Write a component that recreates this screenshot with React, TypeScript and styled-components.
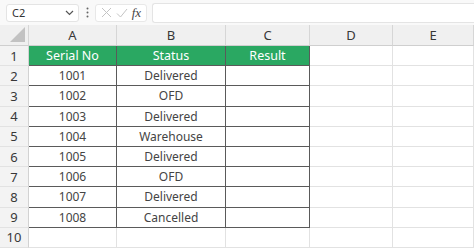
import React from 'react';
import styled, { createGlobalStyle } from 'styled-components';

const GlobalStyle = createGlobalStyle`
  html, body {
    margin: 0;
    padding: 0;
    background: #ffffff;
    overflow: hidden;
  }
  body {
    font-family: "Noto Sans", "Open Sans", sans-serif;
  }
`;

const COLS = [29, 88, 109, 84, 83, 81];
const GREEN = '#2aa862';
const DARK = '#5a5a5a';
const GRID = '#e2e2e2';

const rows = [
  ['Serial No', 'Status', 'Result'],
  ['1001', 'Delivered', ''],
  ['1002', 'OFD', ''],
  ['1003', 'Delivered', ''],
  ['1004', 'Warehouse', ''],
  ['1005', 'Delivered', ''],
  ['1006', 'OFD', ''],
  ['1007', 'Delivered', ''],
  ['1008', 'Cancelled', ''],
  ['', '', ''],
];

const Page = styled.div`
  width: 474px;
  height: 248px;
  overflow: hidden;
  background: #ffffff;
`;

const Toolbar = styled.div`
  display: flex;
  align-items: center;
  height: 25px;
  padding: 0 0 0 6px;
  box-sizing: border-box;
  background: #f9f9f9;
`;

const NameBox = styled.div`
  display: flex;
  align-items: center;
  justify-content: space-between;
  width: 73px;
  height: 18px;
  box-sizing: border-box;
  padding: 0 4px 0 5px;
  background: #ffffff;
  border: 1px solid #e4e4e4;
  border-radius: 3px;
  font-size: 11px;
  color: #333333;
`;

const Dots = styled.div`
  width: 16px;
  display: flex;
  justify-content: center;
`;

const FxBox = styled.div`
  display: flex;
  align-items: center;
  justify-content: space-around;
  width: 52px;
  height: 18px;
  box-sizing: border-box;
  padding: 0 3px;
  background: #ffffff;
  border: 1px solid #e8e8e8;
  border-radius: 3px;
`;

const Fx = styled.span`
  font-family: "Liberation Serif", serif;
  font-style: italic;
  font-size: 13px;
  color: #444444;
  line-height: 1;
`;

const FormulaInput = styled.div`
  flex: 1;
  height: 18px;
  margin-left: 5px;
  background: #ffffff;
  border: 1px solid #e4e4e4;
  border-right: none;
  border-radius: 3px 0 0 3px;
`;

const Sheet = styled.div`
  display: grid;
  grid-template-columns: ${COLS.map((c) => `${c}px`).join(' ')};
  grid-template-rows: 21px;
  grid-auto-rows: 20.2px;
`;

const ColHead = styled.div`
  display: flex;
  align-items: center;
  justify-content: center;
  background: #f0f0f0;
  border-right: 1px solid #d6d6d6;
  border-bottom: 1px solid #cfcfcf;
  box-sizing: border-box;
  font-size: 13px;
  color: #383838;
  position: relative;
`;

const Corner = styled(ColHead)`
  svg {
    position: absolute;
    right: 3px;
    bottom: 3px;
  }
`;

const RowHead = styled.div`
  display: flex;
  align-items: center;
  justify-content: center;
  background: #f3f3f3;
  border-right: 1px solid #d2d2d2;
  border-bottom: 1px solid ${GRID};
  box-sizing: border-box;
  font-size: 13px;
  color: #383838;
`;

const Cell = styled.div<{ $head?: boolean; $data?: boolean }>`
  display: flex;
  align-items: center;
  justify-content: center;
  box-sizing: border-box;
  background: ${(p) => (p.$head ? GREEN : '#ffffff')};
  color: ${(p) => (p.$head ? '#ffffff' : '#444444')};
  border-right: 1px solid ${(p) => (p.$data ? DARK : GRID)};
  border-bottom: 1px solid ${(p) => (p.$data ? DARK : GRID)};
  font-size: ${(p) => (p.$head ? '12.5px' : '12px')};
  white-space: nowrap;
`;

export default function App() {
  return (
    <Page>
      <GlobalStyle />
      <Toolbar>
        <NameBox>
          <span>C2</span>
          <svg width="9" height="6" viewBox="0 0 9 6">
            <path d="M1 1 L4.5 4.5 L8 1" fill="none" stroke="#555" strokeWidth="1.2" />
          </svg>
        </NameBox>
        <Dots>
          <svg width="3" height="11" viewBox="0 0 3 11">
            <circle cx="1.5" cy="1.5" r="1" fill="#666" />
            <circle cx="1.5" cy="5.5" r="1" fill="#666" />
            <circle cx="1.5" cy="9.5" r="1" fill="#666" />
          </svg>
        </Dots>
        <FxBox>
          <svg width="11" height="11" viewBox="0 0 11 11">
            <path d="M1 1 L10 10 M10 1 L1 10" stroke="#c4c4c4" strokeWidth="1" />
          </svg>
          <svg width="12" height="10" viewBox="0 0 12 10">
            <path d="M1 5.5 L4.5 9 L11 1" fill="none" stroke="#c4c4c4" strokeWidth="1" />
          </svg>
          <Fx>fx</Fx>
        </FxBox>
        <FormulaInput />
      </Toolbar>
      <Sheet>
        <Corner>
          <svg width="15" height="15" viewBox="0 0 15 15">
            <path d="M15 0 L15 15 L0 15 Z" fill="#c2c2c2" />
          </svg>
        </Corner>
        {['A', 'B', 'C', 'D', 'E'].map((l) => (
          <ColHead key={l}>{l}</ColHead>
        ))}
        {rows.map((r, i) => (
          <React.Fragment key={i}>
            <RowHead>{i + 1}</RowHead>
            {r.map((v, j) => (
              <Cell key={j} $head={i === 0} $data={i < 9}>
                {v}
              </Cell>
            ))}
            <Cell />
            <Cell />
          </React.Fragment>
        ))}
      </Sheet>
    </Page>
  );
}
